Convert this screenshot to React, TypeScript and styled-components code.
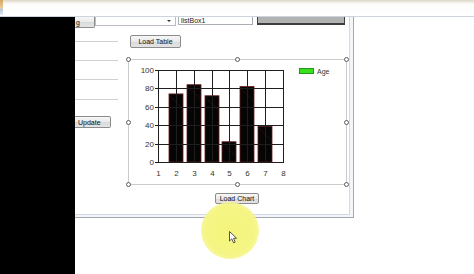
import React from "react";
import styled, { createGlobalStyle } from "styled-components";

const GlobalStyle = createGlobalStyle`
  *, *::before, *::after { box-sizing: border-box; }
  html, body { margin: 0; padding: 0; background: #fff; }
  body { font-family: "Liberation Sans", Arial, sans-serif; }
`;

const Page = styled.div`
  position: relative;
  width: 474px;
  height: 274px;
  overflow: hidden;
  background: #fff;
  display: flex;
  flex-direction: column;
`;

const TitleStrip = styled.div`
  height: 17px;
  flex: none;
  display: flex;
  align-items: flex-start;
  background: linear-gradient(to bottom, #dcd5c6 0px, #eeeae2 2px, #fdfdfc 4px, #fff 100%);
  border-bottom: 1px solid #cdd4de;
`;

const StripIcon = styled.div`
  width: 3px;
  height: 15px;
  background: linear-gradient(#d8a862, #e9cc9c 55%, #bac8dd 62%, #e1e7f0);
`;

const Main = styled.div`
  flex: 1;
  display: flex;
  align-items: flex-start;
`;

const BlackPanel = styled.div`
  width: 75px;
  flex: none;
  align-self: stretch;
  background: #000;
`;

const Window = styled.div`
  width: 279px;
  height: 201px;
  flex: none;
  background: #f2f5f9;
  border-right: 1px solid #a3a8b0;
  border-bottom: 1px solid #a3a8b0;
`;

const Form = styled.div`
  width: 275px;
  height: 198px;
  background: #fff;
  border-right: 1px solid #d2d9e4;
  border-bottom: 1px solid #d2d9e4;
  display: flex;
  flex-direction: column;
  font-size: 7px;
  color: #111;
`;

const TopRow = styled.div`
  height: 11px;
  flex: none;
  display: flex;
  align-items: flex-start;
`;

const buttonSkin = `
  background: linear-gradient(#f7f7f7, #e9e9e9 50%, #dadada 51%, #e4e4e4);
  border: 1px solid #8c8c8c;
  border-radius: 2px;
  color: #111;
  font-size: 7px;
  white-space: nowrap;
  overflow: hidden;
  display: flex;
  align-items: center;
`;

const PartialButton = styled.div`
  ${buttonSkin}
  width: 20px;
  height: 11px;
  border-left: none;
  border-top: none;
  border-radius: 0 0 2px 0;
  justify-content: flex-start;
  padding-left: 1px;
`;

const Combo = styled.div`
  width: 81px;
  height: 9px;
  background: #fff;
  border: 1px solid #b9bdc4;
  border-top: none;
  display: flex;
  align-items: center;
  justify-content: flex-end;
  padding-right: 4px;
`;

const ComboArrow = styled.span`
  width: 0;
  height: 0;
  border-left: 2px solid transparent;
  border-right: 2px solid transparent;
  border-top: 2px solid #333;
`;

const ListBox = styled.div`
  margin-left: 2px;
  width: 75px;
  height: 8px;
  background: #fff;
  border: 1px solid #a9adb4;
  border-top: none;
  padding-left: 2px;
  line-height: 7px;
  font-size: 7px;
  color: #222;
`;

const GrayBar = styled.div`
  margin-left: 4px;
  width: 88px;
  height: 8px;
  background: #b2b2b2;
  border: 1px solid #3d3d3d;
  border-top: none;
  border-bottom-width: 2px;
`;

const Body = styled.div`
  flex: 1;
  display: flex;
`;

const LeftCol = styled.div`
  width: 43px;
  flex: none;
  display: flex;
  flex-direction: column;
`;

const Rule = styled.div<{ $gap: number }>`
  height: 1px;
  margin-top: ${(p) => p.$gap}px;
  background: #d0d0d0;
`;

const UpdateButton = styled.div`
  ${buttonSkin}
  margin-top: 16px;
  width: 36px;
  height: 12px;
  border-left: none;
  border-radius: 0 2px 2px 0;
  padding-left: 3px;
`;

const RightCol = styled.div`
  flex: 1;
  display: flex;
  flex-direction: column;
  align-items: flex-start;
`;

const FormButton = styled.div<{ $w: number; $h: number; $top: number; $left: number }>`
  ${buttonSkin}
  justify-content: center;
  width: ${(p) => p.$w}px;
  height: ${(p) => p.$h}px;
  margin-top: ${(p) => p.$top}px;
  margin-left: ${(p) => p.$left}px;
`;

const ChartBox = styled.div`
  position: relative;
  margin-top: 11px;
  margin-left: 10px;
  width: 219px;
  height: 126px;
  border: 1px solid #cbcbcb;
  display: flex;
`;

const Handle = styled.span<{ $cx: number; $cy: number }>`
  position: absolute;
  left: ${(p) => p.$cx - 2}px;
  top: ${(p) => p.$cy - 2}px;
  width: 5px;
  height: 5px;
  border-radius: 50%;
  border: 1px solid #5c5c5c;
  background: #fff;
`;

const Highlight = styled.div`
  position: absolute;
  left: 201px;
  top: 202px;
  width: 58px;
  height: 57px;
  border-radius: 50%;
  background: radial-gradient(circle, #f4f47c 0%, #f5f585 60%, rgba(247, 247, 150, 0.65) 84%, rgba(250, 250, 195, 0) 100%);
`;

const Cursor = styled.svg`
  position: absolute;
  left: 229px;
  top: 231px;
`;

const gridX = [29, 47, 65, 83, 100, 118, 136, 154];
const gridY = [102, 84, 65, 47, 28, 10];
const values: [number, number][] = [
  [2, 74],
  [3, 84],
  [4, 72],
  [5, 22],
  [6, 82],
  [7, 39],
];

function Chart() {
  const plotTop = 10;
  const plotBottom = 102;
  const scale = (plotBottom - plotTop) / 100;
  return (
    <svg width="217" height="124" viewBox="0 0 217 124">
      {values.map(([x, v]) => {
        const cx = gridX[x - 1];
        const top = plotBottom - v * scale;
        return (
          <g key={x}>
            <rect x={cx - 7} y={top} width={14} height={plotBottom - top} fill="#050505" stroke="#6d1a1a" strokeWidth={0.8} />
            <line x1={cx - 6} y1={top + 2} x2={cx + 6} y2={Math.min(top + 14, plotBottom)} stroke="#5a1616" strokeWidth={0.6} opacity={0.7} />
          </g>
        );
      })}
      {gridY.map((y) => (
        <line key={"h" + y} x1={26} y1={y + 0.5} x2={154.5} y2={y + 0.5} stroke="#1e1e1e" strokeWidth={1} shapeRendering="crispEdges" />
      ))}
      {gridX.map((x) => (
        <line key={"v" + x} x1={x + 0.5} y1={10} x2={x + 0.5} y2={103} stroke="#1e1e1e" strokeWidth={1} shapeRendering="crispEdges" />
      ))}
      {gridY.map((y, i) => (
        <text key={"yl" + y} x={25} y={y + 3} fontSize={8} fill="#333" textAnchor="end" fontFamily="Liberation Sans, Arial, sans-serif">
          {i * 20}
        </text>
      ))}
      {gridX.map((x, i) => (
        <text key={"xl" + x} x={x + 0.5} y={116} fontSize={8} fill="#333" textAnchor="middle" fontFamily="Liberation Sans, Arial, sans-serif">
          {i + 1}
        </text>
      ))}
      <rect x={170.5} y={8.5} width={14} height={5} fill="#3adf1e" stroke="#23961a" strokeWidth={1} />
      <text x={188} y={14} fontSize={7} fill="#333" fontFamily="Liberation Sans, Arial, sans-serif">
        Age
      </text>
    </svg>
  );
}

const handles: [number, number][] = [
  [-1, -1],
  [108, -1],
  [217, -1],
  [-1, 62],
  [217, 62],
  [-1, 124],
  [108, 124],
  [217, 124],
];

export default function App() {
  return (
    <>
      <GlobalStyle />
      <Page>
        <TitleStrip>
          <StripIcon />
        </TitleStrip>
        <Main>
          <BlackPanel />
          <Window>
            <Form>
              <TopRow>
                <PartialButton>g</PartialButton>
                <Combo>
                  <ComboArrow />
                </Combo>
                <ListBox>listBox1</ListBox>
                <GrayBar />
              </TopRow>
              <Body>
                <LeftCol>
                  <Rule $gap={13} />
                  <Rule $gap={18} />
                  <Rule $gap={18} />
                  <Rule $gap={19} />
                  <UpdateButton>Update</UpdateButton>
                </LeftCol>
                <RightCol>
                  <FormButton $w={51} $h={13} $top={7} $left={12}>
                    Load Table
                  </FormButton>
                  <ChartBox>
                    <Chart />
                    {handles.map(([cx, cy]) => (
                      <Handle key={cx + "-" + cy} $cx={cx} $cy={cy} />
                    ))}
                  </ChartBox>
                  <FormButton $w={44} $h={11} $top={8} $left={97}>
                    Load Chart
                  </FormButton>
                </RightCol>
              </Body>
            </Form>
          </Window>
        </Main>
        <Highlight />
        <Cursor width="9" height="13" viewBox="0 0 9 13">
          <path d="M0.5 0.5 L0.5 10 L2.8 7.9 L4.6 11.8 L6.2 11.1 L4.5 7.3 L7.6 7.3 Z" fill="#fff" stroke="#444" strokeWidth="0.9" strokeLinejoin="round" />
        </Cursor>
      </Page>
    </>
  );
}
